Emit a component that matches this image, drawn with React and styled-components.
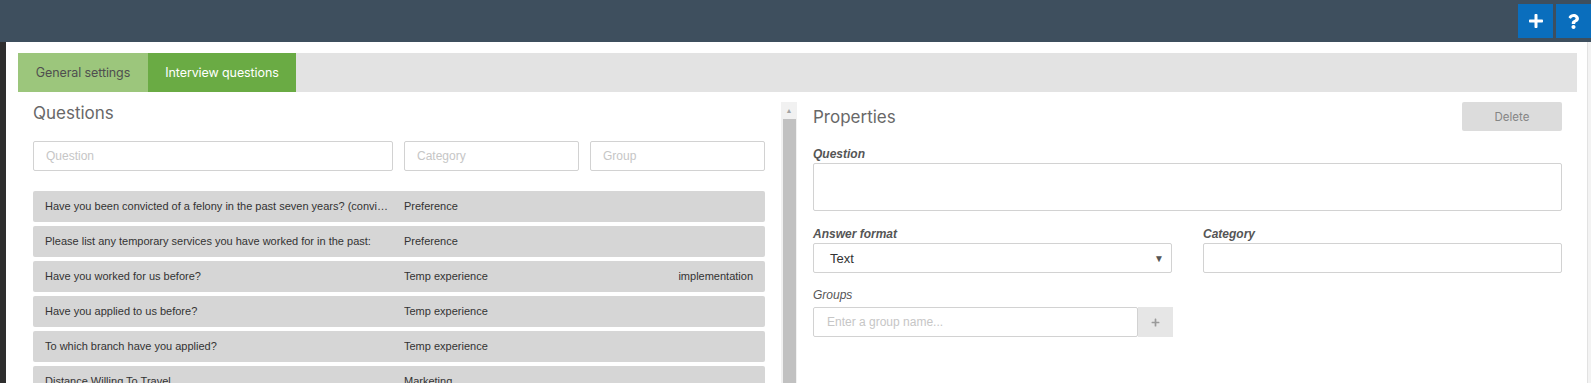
import React from "react";
import styled, { createGlobalStyle } from "styled-components";
import { FaPlus, FaQuestion } from "react-icons/fa";

const Global = createGlobalStyle`
  html, body { margin: 0; padding: 0; height: 100%; overflow: hidden; background: #fff; }
  * { box-sizing: border-box; }
  #root { height: 100%; }
`;

const Page = styled.div`
  display: flex;
  flex-direction: column;
  height: 100%;
  font-family: "Liberation Sans", Arial, sans-serif;
`;

const TopBar = styled.header`
  height: 42px;
  flex: none;
  background: #3e4f5e;
  display: flex;
  justify-content: flex-end;
  align-items: flex-start;
  padding-top: 4px;
  gap: 3px;
`;

const TopButton = styled.button`
  width: 35px;
  height: 34px;
  border: none;
  padding: 0;
  background: #0a6ebd;
  color: #fff;
  display: flex;
  align-items: center;
  justify-content: center;
  cursor: pointer;
`;

const Body = styled.div`
  flex: 1;
  display: flex;
  min-height: 0;
`;

const LeftStrip = styled.div`
  width: 6px;
  background: #2e2e2e;
`;

const RightStrip = styled.div`
  width: 4px;
  background: #f3f3f3;
  border-left: 1px solid #e2e2e2;
`;

const Main = styled.main`
  flex: 1;
  background: #fff;
  padding: 11px 10px 0 12px;
  display: flex;
  flex-direction: column;
  min-width: 0;
`;

const TabBar = styled.nav`
  height: 39px;
  background: #e3e3e3;
  display: flex;
  flex: none;
`;

const Tab = styled.div`
  display: flex;
  align-items: center;
  padding: 0 15px;
  font-family: Inter, "Open Sans", sans-serif;
  font-size: 12.5px;
  letter-spacing: -0.1px;
  background: ${(p) => (p.$active ? "#6aab44" : "#9cc67c")};
  color: ${(p) => (p.$active ? "#ffffff" : "#4f4f4f")};
  width: ${(p) => p.$w}px;
  justify-content: center;
`;

const Columns = styled.div`
  flex: 1;
  display: grid;
  grid-template-columns: 779px 1fr;
  min-height: 0;
`;

const LeftPane = styled.section`
  display: flex;
  gap: 16px;
  padding: 10px 0 0 15px;
  min-height: 0;
`;

const LeftContent = styled.div`
  flex: 1;
  min-width: 0;
`;

const Heading = styled.h2`
  margin: 0;
  font-family: Inter, "Open Sans", sans-serif;
  font-weight: 400;
  font-size: 17px;
  line-height: 22px;
  color: #686868;
`;

const FilterGrid = styled.div`
  display: grid;
  grid-template-columns: 360px 175px 1fr;
  column-gap: 11px;
  margin-top: 17px;
  margin-bottom: 20px;
`;

const TextInput = styled.input`
  height: 30px;
  width: 100%;
  border: 1px solid #d2d2d2;
  border-radius: 2px;
  padding: 0 ${(p) => p.$pad || 12}px;
  font-family: "Liberation Sans", Arial, sans-serif;
  font-size: 12px;
  color: #333;
  background: #fff;
  outline: none;
  &::placeholder { color: #c6c6c6; }
`;

const Row = styled.div`
  display: grid;
  grid-template-columns: 360px 175px 1fr;
  column-gap: 11px;
  align-items: center;
  height: 31px;
  padding-bottom: 2px;
  margin-bottom: 4px;
  background: #d6d6d6;
  border-radius: 2px;
  font-size: 11px;
  color: #333;
`;

const Cell = styled.div`
  white-space: nowrap;
  overflow: hidden;
  text-overflow: ellipsis;
  padding-left: ${(p) => (p.$first ? 12 : 0)}px;
  padding-right: ${(p) => (p.$right ? 12 : 0)}px;
  text-align: ${(p) => (p.$right ? "right" : "left")};
`;

const ScrollTrack = styled.div`
  width: 16px;
  flex: none;
  background: #f1f1f1;
  display: flex;
  flex-direction: column;
`;

const ScrollArrow = styled.div`
  height: 17px;
  flex: none;
  display: flex;
  align-items: center;
  justify-content: center;
  font-size: 7px;
  color: #a3a3a3;
`;

const ScrollThumb = styled.div`
  flex: 1;
  background: #c1c1c1;
  margin: 0 1px 0 2px;
`;

const RightPane = styled.section`
  padding: 10px 15px 0 16px;
`;

const PropHeader = styled.div`
  display: flex;
  align-items: center;
  justify-content: space-between;
  height: 29px;
`;

const DeleteButton = styled.button`
  width: 100px;
  height: 29px;
  border: none;
  border-radius: 2px;
  background: #dcdcdc;
  color: #858585;
  font-family: Inter, "Open Sans", sans-serif;
  font-size: 11.5px;
  padding: 0;
`;

const Field = styled.div`
  margin-top: ${(p) => p.$mt || 16}px;
`;

const Label = styled.label`
  display: block;
  font-size: 12px;
  line-height: 14px;
  font-style: italic;
  font-weight: ${(p) => (p.$light ? 400 : 700)};
  color: #555;
  margin-bottom: ${(p) => p.$mb || 2}px;
`;

const TextArea = styled.div`
  height: 48px;
  border: 1px solid #d2d2d2;
  border-radius: 2px;
  background: #fff;
`;

const TwoCol = styled.div`
  display: grid;
  grid-template-columns: 1fr 1fr;
  column-gap: 31px;
`;

const Select = styled.div`
  height: 30px;
  border: 1px solid #d2d2d2;
  border-radius: 2px;
  display: flex;
  align-items: center;
  justify-content: space-between;
  padding: 0 7px 0 16px;
  font-size: 13px;
  color: #333;
`;

const Caret = styled.span`
  font-size: 10px;
  color: #555;
`;

const GroupRow = styled.div`
  display: flex;
  width: 360px;
`;

const AddButton = styled.button`
  width: 35px;
  height: 30px;
  flex: none;
  border: none;
  background: #e6e6e6;
  color: #9a9a9a;
  display: flex;
  align-items: center;
  justify-content: center;
  padding: 0;
`;

const rows = [
  ["Have you been convicted of a felony in the past seven years? (conviction will not necessarily disqualify)", "Preference", ""],
  ["Please list any temporary services you have worked for in the past:", "Preference", ""],
  ["Have you worked for us before?", "Temp experience", "implementation"],
  ["Have you applied to us before?", "Temp experience", ""],
  ["To which branch have you applied?", "Temp experience", ""],
  ["Distance Willing To Travel", "Marketing", ""],
];

export default function App() {
  return (
    <Page>
      <Global />
      <TopBar>
        <TopButton aria-label="Add"><FaPlus size={16} /></TopButton>
        <TopButton aria-label="Help"><FaQuestion size={15} /></TopButton>
      </TopBar>
      <Body>
        <LeftStrip />
        <Main>
          <TabBar>
            <Tab $w={130}>General settings</Tab>
            <Tab $active $w={148}>Interview questions</Tab>
          </TabBar>
          <Columns>
            <LeftPane>
              <LeftContent>
                <Heading>Questions</Heading>
                <FilterGrid>
                  <TextInput placeholder="Question" />
                  <TextInput placeholder="Category" />
                  <TextInput placeholder="Group" />
                </FilterGrid>
                {rows.map(([q, c, g], i) => (
                  <Row key={i}>
                    <Cell $first>{q}</Cell>
                    <Cell>{c}</Cell>
                    <Cell $right>{g}</Cell>
                  </Row>
                ))}
              </LeftContent>
              <ScrollTrack>
                <ScrollArrow>▲</ScrollArrow>
                <ScrollThumb />
              </ScrollTrack>
            </LeftPane>
            <RightPane>
              <PropHeader>
                <Heading>Properties</Heading>
                <DeleteButton>Delete</DeleteButton>
              </PropHeader>
              <Field>
                <Label>Question</Label>
                <TextArea />
              </Field>
              <Field>
                <TwoCol>
                  <div>
                    <Label>Answer format</Label>
                    <Select>
                      <span>Text</span>
                      <Caret>▼</Caret>
                    </Select>
                  </div>
                  <div>
                    <Label>Category</Label>
                    <TextInput />
                  </div>
                </TwoCol>
              </Field>
              <Field $mt={15}>
                <Label $light $mb={5}>Groups</Label>
                <GroupRow>
                  <TextInput $pad={13} placeholder="Enter a group name..." />
                  <AddButton aria-label="Add group"><FaPlus size={9} /></AddButton>
                </GroupRow>
              </Field>
            </RightPane>
          </Columns>
        </Main>
        <RightStrip />
      </Body>
    </Page>
  );
}
